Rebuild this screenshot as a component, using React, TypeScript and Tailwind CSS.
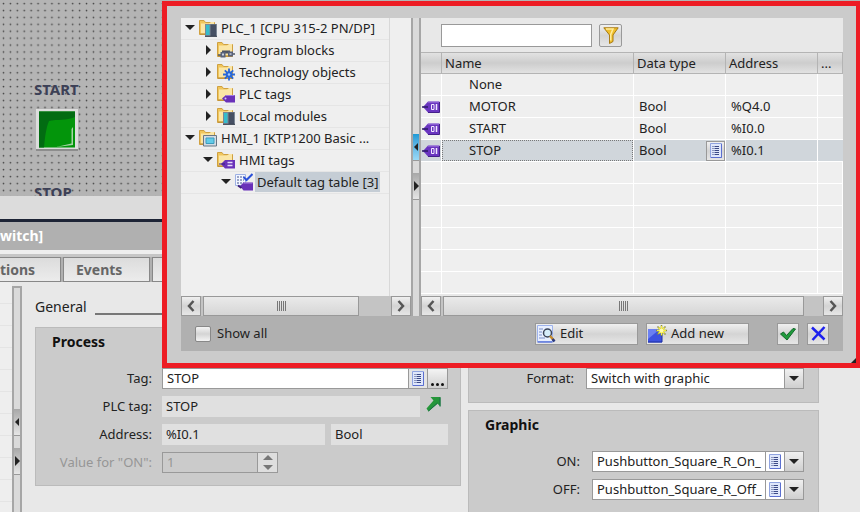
import type { ReactNode } from 'react';

type IconKind = 'plc' | 'blocks' | 'tech' | 'tags' | 'modules' | 'hmi' | 'hmitags' | 'table';

type TreeItem = {
  label: string;
  icon: IconKind;
  indent: string;
  open?: boolean;
  selected?: boolean;
};

const treeItems: TreeItem[] = [
  { label: 'PLC_1 [CPU 315-2 PN/DP]', icon: 'plc', indent: 'pl-0', open: true },
  { label: 'Program blocks', icon: 'blocks', indent: 'pl-[18px]' },
  { label: 'Technology objects', icon: 'tech', indent: 'pl-[18px]' },
  { label: 'PLC tags', icon: 'tags', indent: 'pl-[18px]' },
  { label: 'Local modules', icon: 'modules', indent: 'pl-[18px]' },
  { label: 'HMI_1 [KTP1200 Basic ...', icon: 'hmi', indent: 'pl-0', open: true },
  { label: 'HMI tags', icon: 'hmitags', indent: 'pl-[18px]', open: true },
  { label: 'Default tag table [3]', icon: 'table', indent: 'pl-[36px]', open: true, selected: true },
];

const tags = [
  { name: 'None', type: '', address: '' },
  { name: 'MOTOR', type: 'Bool', address: '%Q4.0' },
  { name: 'START', type: 'Bool', address: '%I0.0' },
  { name: 'STOP', type: 'Bool', address: '%I0.1', selected: true },
];

const emptyRows = [0, 1, 2, 3, 4, 5];

/* ---------- icons ---------- */

const Triangle = ({ dir }: { dir: 'down' | 'right' | 'left' | 'up' }) => {
  const shapes = {
    down: 'M0 2h10L5 7z',
    up: 'M0 7h10L5 2z',
    right: 'M3 0v10l5-5z',
    left: 'M7 1v8L3 5z',
  };
  return (
    <svg width="10" height="10" viewBox="0 0 10 10" className="shrink-0">
      <path d={shapes[dir]} fill="currentColor" />
    </svg>
  );
};

const TreeIcon = ({ kind }: { kind: IconKind }) => (
  <svg width="18" height="18" viewBox="0 0 18 18" className="shrink-0">
    {kind !== 'table' && (
      <>
        <path d="M.5 1.500h4.500l1.500 2h9v12H.5z" fill="#f0c65c" stroke="#cfa040" />
        <path d="M2 4.500h8l2-1.500h3v11.500H2z" fill="#fbe6a6" />
        <path d="M1 15h14" stroke="#b98a35" />
      </>
    )}
    {(kind === 'plc' || kind === 'modules') && (
      <>
        <path d="M6 5h12v12.500H6z" fill="#7c8795" />
        <path d="M7 6h3.500v10H7z" fill="#35bccb" />
        <path d="M11.500 5.500H17V17h-5.500z" fill="#465063" />
        <path d="M6 17.300h12" stroke="#333b48" />
      </>
    )}
    {kind === 'blocks' && (
      <>
        <path d="M1 14h5M11 13h7" stroke="#4e5564" strokeWidth="1.500" />
        <path d="M5 9.500h8v3H5z" fill="#4e5564" />
        <path d="M3.500 11h5v5.500h-5zM11 10.500h5v5h-5z" fill="#59627a" />
        <path d="M5 12.500h2v2H5z" fill="#c9d0de" />
        <path d="M12.500 12h2v2h-2z" fill="#aab3c6" />
      </>
    )}
    {kind === 'tech' && (
      <>
        <path d="M12 5.500v12M6 11.500h12M7.800 7.300l8.400 8.400M16.200 7.300l-8.400 8.400" stroke="#2767d8" strokeWidth="1.800" />
        <circle cx="12" cy="11.500" r="3.200" fill="#2767d8" />
        <circle cx="12" cy="11.500" r="1.200" fill="#a8d0ff" />
      </>
    )}
    {kind === 'tags' && (
      <>
        <path d="M5 13.500l4-3.500h9v7.500H9z" fill="#6931b9" />
        <path d="M9 10.500h8.500" stroke="#a37be0" />
        <circle cx="8.500" cy="13.500" r="1" fill="#d9c6f5" />
      </>
    )}
    {kind === 'hmi' && (
      <>
        <path d="M4.500 6.500h13v10.500h-13z" fill="#d3dce4" stroke="#687684" />
        <path d="M7 9h8v5.500H7z" fill="#62cbe8" stroke="#3d9bbd" />
      </>
    )}
    {kind === 'hmitags' && (
      <>
        <path d="M4 13l4-4h10v8.500H8z" fill="#6931b9" />
        <path d="M10.500 11.500h5M10.500 14.500h5" stroke="#e6d9fa" strokeWidth="1.500" />
        <path d="M2 13h6" stroke="#3b1c78" />
      </>
    )}
    {kind === 'table' && (
      <>
        <path d="M.5 1.500h10v11H.5z" fill="#f2f6ff" stroke="#9db0e4" />
        <path d="M2 4h7M2 7h7M2 10h7" stroke="#42558f" strokeDasharray="2 1" />
        <path d="M8.500 4l3 3L17.500 1" fill="none" stroke="#2a50d8" strokeWidth="2" />
        <path d="M5 13l3.500-3.500H18v8H8.500z" fill="#6931b9" />
        <path d="M8.500 10h9" stroke="#a885dd" />
        <path d="M3 12.500l3.500 2.500" stroke="#3b1c78" strokeWidth="2" />
      </>
    )}
  </svg>
);

const TagIcon = () => (
  <svg width="18" height="12" viewBox="0 0 18 12" className="block">
    <path d="M1 6l5-5.500h11.500v11H6z" fill="#6a35c0" />
    <path d="M6 1h11" stroke="#a583e0" />
    <path d="M6 11.500h11.500V1" fill="none" stroke="#44208a" />
    <path d="M0 6h6" stroke="#2b1a66" strokeWidth="1.500" />
    <path d="M9.500 3.500h2.500v5H9.500z" fill="none" stroke="#f0e8ff" />
    <path d="M14.500 3v6" stroke="#f0e8ff" strokeWidth="1.500" />
  </svg>
);

const ListIcon = () => (
  <svg width="12" height="15" viewBox="0 0 12 15">
    <path d="M.5.5h11v14H.5z" fill="#dfe7fb" stroke="#8fa3e0" />
    <path d="M11.500 1v13.500H1" fill="none" stroke="#5b6fd0" />
    <path d="M2.500 3.500h1M2.500 5.500h1M2.500 7.500h1M2.500 9.500h1M2.500 11.500h1M4.500 3.500H9M4.500 5.500H9M4.500 7.500H9M4.500 9.500H9M4.500 11.500H9" stroke="#3c4a86" />
  </svg>
);

const FunnelIcon = () => (
  <svg width="16" height="17" viewBox="0 0 16 17">
    <path d="M.8.800h14.400L10 8v6.500L6.500 16.500V8z" fill="#f0bf2c" stroke="#a87a12" />
    <path d="M3 2h7L7.700 7.500v6" fill="none" stroke="#ffec9a" strokeWidth="1.500" />
  </svg>
);

const EditIcon = () => (
  <svg width="19" height="18" viewBox="0 0 19 18">
    <path d="M.5.5h15v16H.5z" fill="#e8efff" stroke="#9db2ec" />
    <path d="M.5 17h15" stroke="#5f79dc" strokeWidth="1.500" />
    <path d="M2 4h4M2 7h3M2 10h3M2 13h6" stroke="#7b8fc9" />
    <circle cx="10.500" cy="8" r="4" fill="#d6edfa" stroke="#3a4358" strokeWidth="1.500" />
    <path d="M13 11l4 4.500" stroke="#c78a28" strokeWidth="2.500" />
    <path d="M15.500 14l2 2.500" stroke="#2b3a80" strokeWidth="2.500" />
  </svg>
);

const AddIcon = () => (
  <svg width="19" height="18" viewBox="0 0 19 18">
    <path d="M0 4h14v13.500H0z" fill="#3d52e0" />
    <path d="M0 4h12L0 14z" fill="#6b80f2" />
    <path d="M0 17h14V5" fill="none" stroke="#1d2ea0" />
    <path d="M13.500 0v11M8 5.500h11M9.500 1.500l8 8M17.500 1.500l-8 8" stroke="#8a9040" strokeWidth="1.500" />
    <path d="M13.500 1v9M9 5.500h9M10.500 2.500l6 6M16.500 2.500l-6 6" stroke="#f8ee3c" strokeWidth="1.300" />
    <circle cx="13.500" cy="5.500" r="2" fill="#fffbb0" />
  </svg>
);

const CheckIcon = () => (
  <svg width="16" height="14" viewBox="0 0 16 14">
    <path d="M.5 7l3-2 3 3.500L13 1.500l2.500.5L7 13z" fill="#1f9a3c" stroke="#12692a" />
  </svg>
);

const CrossIcon = () => (
  <svg width="15" height="15" viewBox="0 0 15 15">
    <path d="M1 1.500l12.500 12M13.500 1L1.500 14" stroke="#1c20ee" strokeWidth="2.500" />
  </svg>
);

const JumpIcon = () => (
  <svg width="15" height="16" viewBox="0 0 15 16">
    <path d="M4.500 1h10v9.500l-3-2.800L2.500 15.500.5 12.500 7.500 4.500z" fill="#25963a" />
    <path d="M14 1.500v9M2.500 15l9-8" stroke="#1b6a4a" />
  </svg>
);

const Chevron = ({ dir }: { dir: 'left' | 'right' }) => (
  <svg width="8" height="12" viewBox="0 0 8 12">
    <path d={dir === 'left' ? 'M6.500 1L2 6l4.500 5' : 'M1.500 1L6 6l-4.500 5'} fill="none" stroke="#555" strokeWidth="2.500" />
  </svg>
);

const StartButtonFace = () => (
  <svg width="42" height="42" viewBox="0 0 42 42" className="block">
    <path d="M0 0h42v42H0z" fill="#dcdcdc" />
    <path d="M0 41h42" stroke="#8d8d8d" strokeWidth="2" />
    <path d="M3 2.500h36v36H3z" fill="#03950b" />
    <path d="M3 2.500h36V8c-9 4-18 2-26 4-3 7-4 16-5 26.500H3z" fill="#026c12" />
    <path d="M35.500 20l1.500-2v18l-17 2 15.500-3.500z" fill="#a7d4a6" />
  </svg>
);

/* ---------- small controls ---------- */

const ToolButton = ({ label, className = '', children }: { label: string; className?: string; children: ReactNode }) => (
  <button
    aria-label={label}
    className={`flex items-center justify-center shrink-0 border border-[#999] bg-linear-to-b from-[#f0f0f0] via-[#d4d4d4] to-[#e6e6e6] ${className}`}
  >
    {children}
  </button>
);

const ScrollBar = ({ className }: { className: string }) => (
  <div className="flex h-5 bg-[#c4c4c4]">
    <ToolButton label="Scroll left" className="w-5">
      <Chevron dir="left" />
    </ToolButton>
    <div className="flex flex-1 pl-0.5">
      <div className={`flex items-center justify-center gap-px border border-[#999] bg-linear-to-b from-[#eaeaea] to-[#d6d6d6] ${className}`}>
        {[0, 1, 2, 3, 4].map((n) => (
          <span key={n} className="h-2.5 w-px bg-[#777]" />
        ))}
      </div>
    </div>
    <ToolButton label="Scroll right" className="w-5">
      <Chevron dir="right" />
    </ToolButton>
  </div>
);

const Splitter = ({ active, className }: { active?: boolean; className: string }) => (
  <div className={`flex flex-col gap-3 shrink-0 border-x-2 border-[#a6a6a6] bg-[#dadada] ${className}`}>
    <button
      aria-label="Collapse left"
      className={`flex h-[27px] items-center justify-center overflow-hidden border-b border-[#999] bg-linear-to-b ${
        active ? 'from-[#1b9ad6] to-[#9ad9f6]' : 'from-[#a8a8a8] to-[#e6e6e6]'
      }`}
    >
      <Triangle dir="left" />
    </button>
    <button
      aria-label="Collapse right"
      className="flex h-[27px] items-center justify-center overflow-hidden border-b border-[#999] bg-linear-to-b from-[#a8a8a8] to-[#e6e6e6]"
    >
      <Triangle dir="right" />
    </button>
  </div>
);

const GraphicField = ({ id, label, value }: { id: string; label: string; value: string }) => (
  <div className="flex h-[21px] items-center">
    <label htmlFor={id} className="w-[111px] shrink-0 text-right">{label}</label>
    <div className="ml-3 flex h-full flex-1 border border-[#999] bg-white">
      <input id={id} defaultValue={value} className="w-0 flex-1 pl-1 outline-none" />
      <button aria-label="Select from list" className="flex w-[19px] items-center justify-center border-l border-[#999]">
        <ListIcon />
      </button>
      <button aria-label="Open" className="flex w-[19px] items-center justify-center border-l border-[#999] bg-linear-to-b from-[#f0f0f0] to-[#cfcfcf]">
        <Triangle dir="down" />
      </button>
    </div>
  </div>
);

/* ---------- tag picker dialog ---------- */

const TagDialog = () => (
  <div role="dialog" aria-label="Tags" className="absolute left-[162px] right-0 top-px border-5 border-r-4 border-[#ed1c24] bg-[#cbcbcb] py-3 pl-3.5 pr-[13px]">
    <div className="grid grid-cols-[230px_10px_1fr]">
      {/* Project tree */}
      <div className="flex flex-col bg-[#efefef]">
        <div className="flex flex-1">
          <ul className="w-[209px] border-r border-[#d8d8d8]">
            {treeItems.map((item) => (
              <li key={item.label} className={`flex h-[22px] items-center border-b border-[#e5e5e5] pb-px ${item.indent}`}>
                <span className="flex w-[18px] justify-center">
                  <Triangle dir={item.open ? 'down' : 'right'} />
                </span>
                <TreeIcon kind={item.icon} />
                <span className={`ml-0.5 whitespace-nowrap px-0.5 leading-5 ${item.selected ? 'bg-[#c5cdd5]' : ''}`}>
                  {item.label}
                </span>
              </li>
            ))}
          </ul>
        </div>
        <ScrollBar className="w-[156px]" />
      </div>

      <Splitter active className="justify-center" />

      {/* Tag list */}
      <div className="flex flex-col bg-[#e8e8e8]">
        <div className="flex h-[34px] items-center gap-[7px] pl-5">
          <input aria-label="Filter" className="h-[23px] w-[151px] border border-[#999] bg-white px-1 outline-none" />
          <ToolButton label="Apply filter" className="h-[23px] w-[23px] rounded-xs">
            <FunnelIcon />
          </ToolButton>
        </div>
        <table className="w-full table-fixed border-separate border-spacing-0 bg-[#efefef] text-left">
          <colgroup>
            <col className="w-[21px]" />
            <col />
            <col className="w-[92px]" />
            <col className="w-[92px]" />
            <col className="w-[25px]" />
          </colgroup>
          <thead>
            <tr className="h-[22px] bg-linear-to-b from-[#e4e4e4] via-[#cdcdcd] to-[#e4e4e4]">
              {['', 'Name', 'Data type', 'Address', '...'].map((title) => (
                <th key={title} className="border-y border-r border-[#b4b4b4] p-0 pl-[3px] font-normal leading-5">
                  {title}
                </th>
              ))}
            </tr>
          </thead>
          <tbody>
            {tags.map((tag) => (
              <tr key={tag.name} className={`h-[22px] ${tag.selected ? 'bg-[#d0d6db]' : ''}`}>
                <td className="border-r border-b border-white p-0 pl-px">{tag.type && <TagIcon />}</td>
                <td className="border-r border-b border-white p-0 leading-[21px]">
                  <div className={`h-[21px] border pl-[26px] leading-[19px] ${tag.selected ? 'border-dotted border-[#777]' : 'border-transparent'}`}>
                    {tag.name}
                  </div>
                </td>
                <td className="border-r border-b border-white p-0 pl-[5px] leading-[21px]">
                  <div className="flex items-center justify-between">
                    {tag.type}
                    {tag.selected && (
                      <ToolButton label="Details" className="h-5 w-[19px]">
                        <ListIcon />
                      </ToolButton>
                    )}
                  </div>
                </td>
                <td className="border-r border-b border-white p-0 pl-[5px] leading-[21px]">{tag.address}</td>
                <td className="border-b border-white p-0" />
              </tr>
            ))}
            {emptyRows.map((n) => (
              <tr key={n} className="h-[22px]">
                {[0, 1, 2, 3, 4].map((c) => (
                  <td key={c} className="border-r border-b border-white p-0" />
                ))}
              </tr>
            ))}
          </tbody>
        </table>
        <div className="h-0.5" />
        <ScrollBar className="w-[361px]" />
      </div>
    </div>

    <div className="flex h-[35px] items-center bg-[#b0b0b0] px-3.5">
      <label className="flex items-center gap-1.5">
        <input type="checkbox" className="size-4 appearance-none rounded-xs border border-[#888] bg-linear-to-b from-[#f4f4f4] via-[#d4d4d4] to-[#f4f4f4]" />
        Show all
      </label>
      <div className="ml-auto flex gap-2">
        <ToolButton label="Edit" className="h-[22px] w-[103px] gap-1 pl-px">
          <EditIcon />
          <span className="flex-1 text-left">Edit</span>
        </ToolButton>
        <ToolButton label="Add new" className="h-[22px] w-[103px] gap-1 pl-px">
          <AddIcon />
          <span className="flex-1 text-left">Add new</span>
        </ToolButton>
        <ToolButton label="Accept" className="ml-5 size-[22px]">
          <CheckIcon />
        </ToolButton>
        <ToolButton label="Cancel" className="size-[22px]">
          <CrossIcon />
        </ToolButton>
      </div>
    </div>
    <svg width="5" height="5" className="absolute bottom-0 right-0">
      <path d="M5 0v5H0z" fill="#222" />
    </svg>
  </div>
);

/* ---------- properties behind the dialog ---------- */

const Properties = () => (
  <div className="flex flex-1 overflow-hidden bg-[#e8e8e8]">
    <div className="w-3 shrink-0 bg-[#eee]">
      {[0, 1, 2, 3, 4, 5, 6, 7, 8, 9].map((n) => (
        <div key={n} className="h-[22px] border-b border-[#e4e4e4]" />
      ))}
    </div>
    <Splitter className="mt-1 w-2.5 border-t-2 pt-[121px]" />
    <div className="flex-1 pl-[13px] pt-[15px]">
      <div className="flex items-end gap-2">
        <h2 className="text-[14px] leading-5">General</h2>
        <span className="mb-0.5 flex-1 border-b-2 border-[#777]" />
      </div>
      <div className="mt-2.5 flex items-start gap-[7px]">
        <section className="h-[159px] w-[426px] shrink-0 border border-[#bbb] bg-[#cbcbcb] pl-4 pr-3">
          <h3 className="pt-0.5 pb-3.5 text-[14px] font-bold leading-6 text-[#111]">Process</h3>
          <div className="grid grid-cols-[100px_1fr] gap-x-2.5 gap-y-[7px] leading-[21px]">
            <label htmlFor="tag" className="text-right">Tag:</label>
            <div className="flex h-[21px] border border-[#999] bg-white">
              <input id="tag" defaultValue="STOP" className="w-0 flex-1 pl-1 outline-none" />
              <button aria-label="Select tag" className="flex w-5 items-center justify-center border-x border-[#999] bg-[#e4e4e4]">
                <ListIcon />
              </button>
              <button aria-label="Browse" className="flex w-[19px] items-end justify-center gap-0.5 bg-linear-to-b from-[#f4f4f4] to-[#cfcfcf] pb-0.5">
                <span className="size-[3px] rounded-full bg-[#111]" />
                <span className="size-[3px] rounded-full bg-[#111]" />
                <span className="size-[3px] rounded-full bg-[#111]" />
              </button>
            </div>

            <label htmlFor="plctag" className="text-right">PLC tag:</label>
            <div className="flex h-[21px] gap-1.5">
              <input id="plctag" readOnly defaultValue="STOP" className="w-0 flex-1 bg-[#e0e0e0] pl-1 outline-none" />
              <button aria-label="Go to tag" className="flex w-[22px] items-start">
                <JumpIcon />
              </button>
            </div>

            <label htmlFor="address" className="text-right">Address:</label>
            <div className="flex h-[21px] gap-1.5">
              <input id="address" readOnly defaultValue="%I0.1" className="w-0 flex-1 bg-[#e0e0e0] pl-1 outline-none" />
              <input aria-label="Data type" readOnly defaultValue="Bool" className="w-[117px] bg-[#e0e0e0] pl-1 outline-none" />
            </div>

            <label htmlFor="on-value" className="text-right text-[#969696]">Value for "ON":</label>
            <div className="flex h-[21px] w-[116px] border border-[#999] text-[#969696]">
              <input id="on-value" disabled defaultValue="1" className="w-0 flex-1 pl-1" />
              <div className="flex w-5 flex-col items-center justify-center border-l border-[#999] bg-[#dedede] text-[#777]">
                <Triangle dir="up" />
                <Triangle dir="down" />
              </div>
            </div>
          </div>
        </section>

        <div className="w-[351px] shrink-0">
          <section className="h-[76px] border border-[#bbb] bg-[#cbcbcb] pl-4 pr-3.5 pt-10">
            <div className="flex h-[21px] items-center">
              <label htmlFor="format" className="w-[89px] text-right">Format:</label>
              <div className="relative ml-3 flex h-full flex-1">
                <select id="format" className="w-full appearance-none border border-[#999] bg-white pl-1 outline-none">
                  <option>Switch with graphic</option>
                </select>
                <span className="pointer-events-none absolute inset-y-0 right-0 flex w-5 items-center justify-center border border-[#999] bg-linear-to-b from-[#f0f0f0] to-[#cfcfcf]">
                  <Triangle dir="down" />
                </span>
              </div>
            </div>
          </section>
          <section className="mt-[7px] h-[120px] border border-[#bbb] bg-[#cbcbcb] pr-3.5">
            <h3 className="pt-0.5 pb-3.5 pl-4 text-[14px] font-bold leading-6 text-[#111]">Graphic</h3>
            <div className="flex flex-col gap-[7px]">
              <GraphicField id="on" label="ON:" value="Pushbutton_Square_R_On_" />
              <GraphicField id="off" label="OFF:" value="Pushbutton_Square_R_Off_" />
            </div>
          </section>
        </div>
      </div>
    </div>
  </div>
);

const App = () => (
  <div className="relative flex h-screen flex-col overflow-hidden bg-[#dcdcdc] font-['Noto_Sans',sans-serif] text-[13px] text-[#222]">
    {/* Screen editor */}
    <div className="relative h-[196px] shrink-0 overflow-hidden bg-[#b4b4b4]">
      <svg width="100%" height="196" className="absolute inset-0">
        <defs>
          <pattern id="dots" width="6.920" height="6.920" patternUnits="userSpaceOnUse">
            <circle cx="3.500" cy="3.500" r="0.850" fill="#444" />
          </pattern>
        </defs>
        <rect width="100%" height="196" fill="url(#dots)" />
      </svg>
      <div className="relative pl-[34px] pt-20 text-[15px] font-bold leading-[18px] text-[#3c4056]">
        <div>START</div>
        <button aria-label="START" className="my-[11px] ml-0.5 block">
          <StartButtonFace />
        </button>
        <div className="mt-8">STOP</div>
      </div>
    </div>

    {/* Inspector window */}
    <div className="mt-[23px] h-[3px] shrink-0 bg-[#1d2436]" />
    <div className="h-7 shrink-0 bg-[#b0b0b0] text-[14px] font-bold leading-7 text-white">witch]</div>
    <div className="h-[7px] shrink-0 border-b-3 border-[#c6c6c6] bg-[#eee]" />
    <div className="flex h-[25px] shrink-0 gap-0.5 bg-[#b0b0b0] text-[14px] font-bold leading-5 text-[#666]">
      <button className="w-[61px] border border-l-0 border-[#888] bg-linear-to-b from-[#dcdcdc] to-[#ececec] text-left">tions</button>
      <button className="w-[87px] border border-[#888] bg-linear-to-b from-[#dcdcdc] to-[#ececec] pl-3 text-left">Events</button>
      <div className="flex-1 border border-[#888] bg-linear-to-b from-[#dcdcdc] to-[#ececec]" />
    </div>
    <Properties />

    <TagDialog />
  </div>
);

export default App;
